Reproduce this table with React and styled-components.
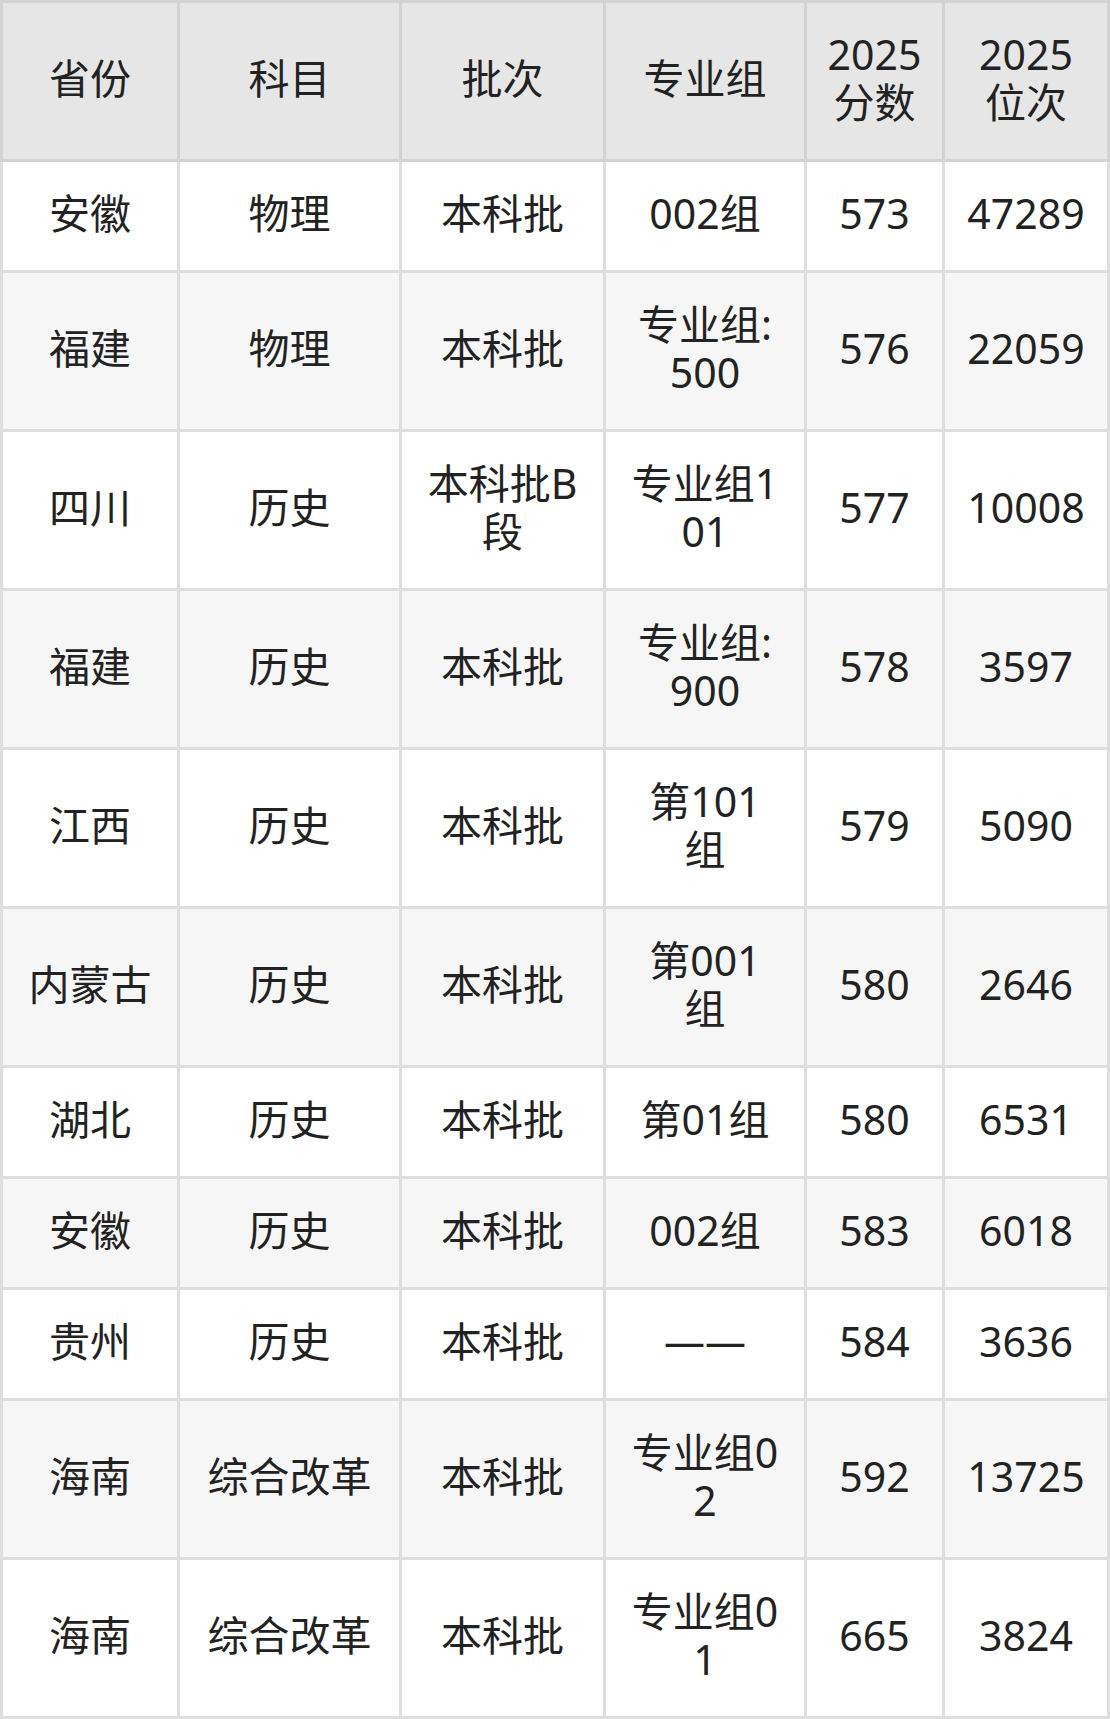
import React from 'react';
import styled, { createGlobalStyle } from 'styled-components';

const headers = ['省份', '科目', '批次', '专业组', '2025\n分数', '2025\n位次'];

const rows = [
  ['安徽', '物理', '本科批', '002组', '573', '47289'],
  ['福建', '物理', '本科批', '专业组:\n500', '576', '22059'],
  ['四川', '历史', '本科批B\n段', '专业组1\n01', '577', '10008'],
  ['福建', '历史', '本科批', '专业组:\n900', '578', '3597'],
  ['江西', '历史', '本科批', '第101\n组', '579', '5090'],
  ['内蒙古', '历史', '本科批', '第001\n组', '580', '2646'],
  ['湖北', '历史', '本科批', '第01组', '580', '6531'],
  ['安徽', '历史', '本科批', '002组', '583', '6018'],
  ['贵州', '历史', '本科批', '——', '584', '3636'],
  ['海南', '综合改革', '本科批', '专业组0\n2', '592', '13725'],
  ['海南', '综合改革', '本科批', '专业组0\n1', '665', '3824'],
];

const GlobalStyle = createGlobalStyle`
  body {
    margin: 0;
    background: #ffffff;
    font-family: "Noto Sans", "Noto Sans CJK SC", sans-serif;
    color: #222222;
  }
`;

const Table = styled.div`
  display: flex;
  flex-direction: column;
  width: 1110px;
`;

const Row = styled.div`
  display: grid;
  grid-template-columns: 174px 219px 201px 198px 135px 162px;
  gap: 3px;
  padding: ${props => (props.$head ? '3px 3px 3px' : '0 3px 3px')};
  background: ${props => (props.$head ? '#d3d3d3' : '#dedede')};
`;

const Cell = styled.div`
  display: flex;
  align-items: center;
  justify-content: center;
  text-align: center;
  padding: 27px 16px 33px;
  font-size: 41px;
  line-height: 48px;
  white-space: pre-line;
  background: ${props => props.$bg};
`;

export default function App() {
  return (
    <>
      <GlobalStyle />
      <Table>
        <Row $head>
          {headers.map((h, i) => (
            <Cell key={i} $bg="#e6e6e6">{h}</Cell>
          ))}
        </Row>
        {rows.map((r, i) => (
          <Row key={i}>
            {r.map((c, j) => (
              <Cell key={j} $bg={i % 2 === 1 ? '#f6f6f6' : '#ffffff'}>{c}</Cell>
            ))}
          </Row>
        ))}
      </Table>
    </>
  );
}
